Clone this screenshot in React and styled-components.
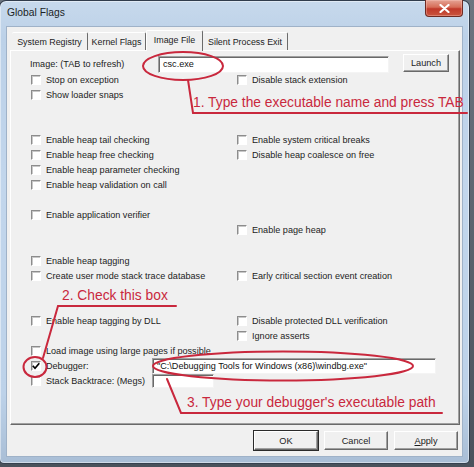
import React from "react";
import styled, { createGlobalStyle } from "styled-components";

const GlobalStyle = createGlobalStyle`
  html, body {
    margin: 0;
    padding: 0;
  }
  body {
    font-family: "Liberation Sans", Arial, sans-serif;
    background: #5d6570;
  }
`;

const RED = "#c9283d";

const flags = [
  { label: "Stop on exception", row: 0, col: 0 },
  { label: "Disable stack extension", row: 0, col: 1 },
  { label: "Show loader snaps", row: 1, col: 0 },
  { label: "Enable heap tail checking", row: 4, col: 0 },
  { label: "Enable system critical breaks", row: 4, col: 1 },
  { label: "Enable heap free checking", row: 5, col: 0 },
  { label: "Disable heap coalesce on free", row: 5, col: 1 },
  { label: "Enable heap parameter checking", row: 6, col: 0 },
  { label: "Enable heap validation on call", row: 7, col: 0 },
  { label: "Enable application verifier", row: 9, col: 0 },
  { label: "Enable page heap", row: 10, col: 1 },
  { label: "Enable heap tagging", row: 12, col: 0 },
  { label: "Create user mode stack trace database", row: 13, col: 0 },
  { label: "Early critical section event creation", row: 13, col: 1 },
  { label: "Enable heap tagging by DLL", row: 16, col: 0 },
  { label: "Disable protected DLL verification", row: 16, col: 1 },
  { label: "Ignore asserts", row: 17, col: 1 },
  { label: "Load image using large pages if possible", row: 18, col: 0 },
];

const tabs = [
  { label: "System Registry", width: 76 },
  { label: "Kernel Flags", width: 58 },
  { label: "Image File", width: 57, active: true },
  { label: "Silent Process Exit", width: 85 },
];

const App = () => {
  return (
    <Screen>
      <GlobalStyle />
      <Window>
        <TitleBar>
          <Title>Global Flags</Title>
          <CloseButton>
            <svg width="11" height="9" viewBox="0 0 11 9">
              <path
                d="M1.5 1 L9.5 8 M9.5 1 L1.5 8"
                stroke="#fff"
                strokeWidth="2.2"
                strokeLinecap="round"
              />
            </svg>
          </CloseButton>
        </TitleBar>
        <Client>
          <TabRow>
            {tabs.map((t) => (
              <Tab key={t.label} $width={t.width} $active={t.active}>
                {t.label}
              </Tab>
            ))}
          </TabRow>
          <Panel>
            <ImageRow>
              <ImageLabel>Image: (TAB to refresh)</ImageLabel>
              <TextBox $width={231} $height={17}>
                csc.exe
              </TextBox>
              <LaunchButton>Launch</LaunchButton>
            </ImageRow>
            <FlagGrid>
              {flags.map((f) => (
                <CheckItem key={f.label} $row={f.row} $col={f.col}>
                  <CheckBox />
                  <Label>{f.label}</Label>
                </CheckItem>
              ))}
              <FieldRow $row={19}>
                <CheckBox>
                  <svg width="8" height="8" viewBox="0 0 8 8">
                    <path
                      d="M0.8 3.8 L3 6.2 L7.3 1.2"
                      stroke="#000"
                      strokeWidth="1.7"
                      fill="none"
                    />
                  </svg>
                </CheckBox>
                <FieldLabel>Debugger:</FieldLabel>
                <TextBox $width={284} $height={16}>
                  "C:\Debugging Tools for Windows (x86)\windbg.exe"
                </TextBox>
              </FieldRow>
              <FieldRow $row={20}>
                <CheckBox />
                <FieldLabel>Stack Backtrace: (Megs)</FieldLabel>
                <TextBox $width={62} $height={14} />
              </FieldRow>
            </FlagGrid>
          </Panel>
          <ButtonRow>
            <DialogButton $default>OK</DialogButton>
            <DialogButton>Cancel</DialogButton>
            <DialogButton>
              <u>A</u>pply
            </DialogButton>
          </ButtonRow>
        </Client>
      </Window>

      <Overlay width="474" height="467" viewBox="0 0 474 467">
        <g stroke={RED} strokeWidth="2" fill="none" strokeLinecap="round">
          <ellipse cx="183" cy="66" rx="40" ry="14" />
          <path d="M188 80 L193 113 L467 113" />
          <ellipse cx="35" cy="367" rx="11.5" ry="10" />
          <path d="M43 358 L58 306 L176 306" />
          <ellipse cx="283" cy="366" rx="130" ry="14.5" />
          <path d="M167 379 L181 413 L442 413" />
        </g>
      </Overlay>
      <Note $x={193} $y={96}>1. Type the executable name and press TAB</Note>
      <Note $x={62} $y={289}>2. Check this box</Note>
      <Note $x={187} $y={396}>3. Type your debugger's executable path</Note>
    </Screen>
  );
};

export default App;

const Screen = styled.div`
  position: relative;
  width: 474px;
  height: 467px;
  overflow: hidden;
  background: linear-gradient(#6c7580, #4a525c);
`;

const Window = styled.div`
  margin-left: -1px;
  width: 471px;
  height: 464px;
  box-sizing: border-box;
  display: flex;
  flex-direction: column;
  padding: 0 6px 6px 6px;
  border: 1px solid rgba(28, 38, 52, 0.85);
  border-radius: 7px 7px 5px 5px;
  background: linear-gradient(
    180deg,
    #c7d9ec 0%,
    #bcd1e8 8%,
    #c2d6ec 40%,
    #bdd2e9 85%,
    #a9bed6 100%
  );
  box-shadow: inset 0 0 0 1px rgba(255, 255, 255, 0.45);
`;

const TitleBar = styled.div`
  height: 25px;
  display: flex;
  align-items: flex-start;
`;

const Title = styled.div`
  margin-top: 6px;
  padding-left: 1px;
  font-size: 10.3px;
  color: #1b1f26;
`;

const CloseButton = styled.div`
  margin-left: auto;
  margin-top: -1px;
  width: 38px;
  height: 17px;
  box-sizing: border-box;
  display: flex;
  align-items: center;
  justify-content: center;
  border: 1px solid #6e2a22;
  border-top: none;
  border-radius: 0 0 4px 4px;
  background: linear-gradient(180deg, #e5a395 0%, #d66d58 45%, #c0392a 55%, #c9553f 100%);
  box-shadow: inset 0 0 0 1px rgba(255, 210, 200, 0.35);
`;

const Client = styled.div`
  flex: 1;
  display: flex;
  flex-direction: column;
  padding: 3px 2px 0 3px;
  background: #f0f0f0;
  border: 1px solid #9fb2c8;
`;

const TabRow = styled.div`
  display: flex;
  align-items: flex-end;
  height: 20px;
  padding-left: 2px;
  position: relative;
  z-index: 1;
`;

const Tab = styled.div`
  width: ${(p) => p.$width}px;
  height: ${(p) => (p.$active ? 21 : 18)}px;
  margin-bottom: ${(p) => (p.$active ? -1 : 0)}px;
  box-sizing: border-box;
  display: flex;
  align-items: center;
  justify-content: center;
  padding-bottom: ${(p) => (p.$active ? 2 : 0)}px;
  font-size: 8.9px;
  color: #1c1c1c;
  white-space: nowrap;
  background: #f0f0f0;
  border-top: 1px solid #ffffff;
  border-left: ${(p) => (p.$active ? "1px solid #ffffff" : "none")};
  border-right: 1px solid #6b6b6b;
  border-radius: 2px 2px 0 0;
`;

const Panel = styled.div`
  height: 375px;
  box-sizing: border-box;
  display: flex;
  flex-direction: column;
  padding-left: 20px;
  border-top: 1px solid #ffffff;
  border-left: 1px solid #ffffff;
  border-right: 1px solid #696969;
  border-bottom: 1px solid #696969;
  box-shadow: inset -1px -1px 0 #a0a0a0;
`;

const ImageRow = styled.div`
  margin-top: 5px;
  height: 16px;
  display: flex;
  align-items: center;
`;

const ImageLabel = styled.div`
  width: 128px;
  margin-left: -1px;
  font-size: 9.1px;
  color: #1c1c1c;
  white-space: nowrap;
`;

const TextBox = styled.div`
  width: ${(p) => p.$width}px;
  height: ${(p) => p.$height}px;
  box-sizing: border-box;
  display: flex;
  align-items: center;
  padding-left: 4px;
  font-size: 9.1px;
  color: #111;
  white-space: nowrap;
  overflow: hidden;
  background: #ffffff;
  border-top: 1px solid #a0a0a0;
  border-left: 1px solid #a0a0a0;
  border-right: 1px solid #f4f4f4;
  border-bottom: 1px solid #f4f4f4;
  box-shadow: inset 1px 1px 0 #696969;
`;

const ButtonBase = styled.div`
  box-sizing: border-box;
  display: flex;
  align-items: center;
  justify-content: center;
  font-size: 9.2px;
  color: #1c1c1c;
  background: #f0f0f0;
  border-top: 1px solid #ffffff;
  border-left: 1px solid #ffffff;
  border-right: 1px solid #696969;
  border-bottom: 1px solid #696969;
  box-shadow: inset -1px -1px 0 #a0a0a0;
`;

const LaunchButton = styled(ButtonBase)`
  margin-left: 14px;
  margin-top: -3px;
  width: 46px;
  height: 18px;
`;

const FlagGrid = styled.div`
  display: grid;
  grid-template-columns: 206px 1fr;
  grid-template-rows: repeat(21, 15.1px);
`;

const CheckItem = styled.div`
  grid-row: ${(p) => p.$row + 1};
  grid-column: ${(p) => p.$col + 1};
  display: flex;
  align-items: center;
  gap: 5px;
  white-space: nowrap;
`;

const FieldRow = styled.div`
  grid-row: ${(p) => p.$row + 1};
  grid-column: 1 / -1;
  display: flex;
  align-items: center;
`;

const CheckBox = styled.div`
  width: 10px;
  height: 10px;
  flex-shrink: 0;
  box-sizing: border-box;
  display: flex;
  align-items: center;
  justify-content: center;
  background: #ffffff;
  border-top: 1px solid #8c8c8c;
  border-left: 1px solid #8c8c8c;
  border-right: 1px solid #ffffff;
  border-bottom: 1px solid #ffffff;
  box-shadow: inset 1px 1px 0 #c8c8c8;
`;

const Label = styled.span`
  font-size: 9.1px;
  color: #1c1c1c;
`;

const FieldLabel = styled(Label)`
  width: 106px;
  margin-left: 5px;
  white-space: nowrap;
`;

const ButtonRow = styled.div`
  display: flex;
  justify-content: flex-end;
  gap: 6px;
  margin-top: 6px;
  padding-right: 2px;
`;

const DialogButton = styled(ButtonBase)`
  width: 64px;
  height: 19px;
  ${(p) =>
    p.$default &&
    `
    outline: 1px solid #2a2a2a;
    outline-offset: 0;
  `}
  u {
    text-decoration: underline;
  }
`;

const Overlay = styled.svg`
  position: absolute;
  left: 0;
  top: 0;
  pointer-events: none;
`;

const Note = styled.div`
  position: absolute;
  left: ${(p) => p.$x}px;
  top: ${(p) => p.$y}px;
  font-size: 13.8px;
  line-height: 14px;
  color: ${RED};
  white-space: nowrap;
`;
